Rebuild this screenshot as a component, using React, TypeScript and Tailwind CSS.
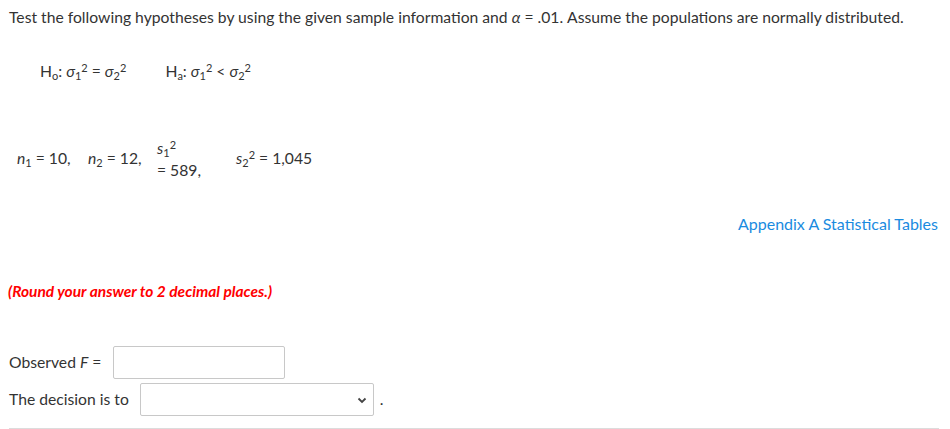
import React from 'react';

export default function App(): React.ReactElement {
  return (
    <div className="w-[950px] h-[429px] overflow-hidden bg-white text-[#333] text-[15.7px] font-['Lato',sans-serif]">
      <div className="pl-[9px] pr-[12px] pt-[6px]">
        {/* intro */}
        <p className="leading-[22px]">
          Test the following hypotheses by using the given sample information and <i>α</i> = .01. Assume the populations are normally distributed.
        </p>

        {/* hypotheses */}
        <div className="flex gap-[39px] pl-[31px] mt-[32px] leading-[22px]">
          <span>
            H<sub className="text-[11px]">o</sub>: <i>σ</i><sub className="text-[11px]">1</sub><sup className="text-[11px]">2</sup> = <i>σ</i><sub className="text-[11px]">2</sub><sup className="text-[11px]">2</sup>
          </span>
          <span>
            H<sub className="text-[11px]">a</sub>: <i>σ</i><sub className="text-[11px]">1</sub><sup className="text-[11px]">2</sup> &lt; <i>σ</i><sub className="text-[11px]">2</sub><sup className="text-[11px]">2</sup>
          </span>
        </div>

        {/* sample info */}
        <div className="flex items-center mt-[55px] pl-[8px]">
          <span className="w-[71px]"><i>n</i><sub className="text-[11px]">1</sub> = 10,</span>
          <span className="w-[69px]"><i>n</i><sub className="text-[11px]">2</sub> = 12,</span>
          <span className="flex flex-col w-[79px] leading-[22px]">
            <span><i>s</i><sub className="text-[11px]">1</sub><sup className="text-[11px]">2</sup></span>
            <span>= 589,</span>
          </span>
          <span><i>s</i><sub className="text-[11px]">2</sub><sup className="text-[11px]">2</sup> = 1,045</span>
        </div>

        {/* appendix link */}
        <div className="flex justify-end mt-[32px]">
          <a className="text-[#1a8be0] text-[16px] leading-[22px]">Appendix A Statistical Tables</a>
        </div>

        {/* note */}
        <p className="mt-[45px] text-[#ff0000] italic font-bold text-[15.5px] leading-[22px] -ml-[1px]">
          (Round your answer to 2 decimal places.)
        </p>

        {/* inputs */}
        <div className="flex items-center mt-[44px]">
          <span className="mr-[12px]">Observed <i>F</i> =</span>
          <div className="w-[172px] h-[33px] border border-[#c8c8c8] rounded-[2px] bg-white" />
        </div>
        <div className="flex items-center mt-[4px]">
          <span className="mr-[11px]">The decision is to</span>
          <div className="w-[234px] h-[33px] border border-[#c8c8c8] rounded-[2px] bg-white flex items-center justify-end pr-[6px]">
            <svg width="10" height="8" viewBox="0 0 10 8" className="text-[#444]">
              <path d="M1.5 2.5 L5 6 L8.5 2.5" fill="none" stroke="currentColor" strokeWidth="1.8" />
            </svg>
          </div>
          <span className="ml-[6px]">.</span>
        </div>
        <div className="mt-[12px] border-t border-[#dcdcdc] w-[930px]" />
      </div>
    </div>
  );
}
